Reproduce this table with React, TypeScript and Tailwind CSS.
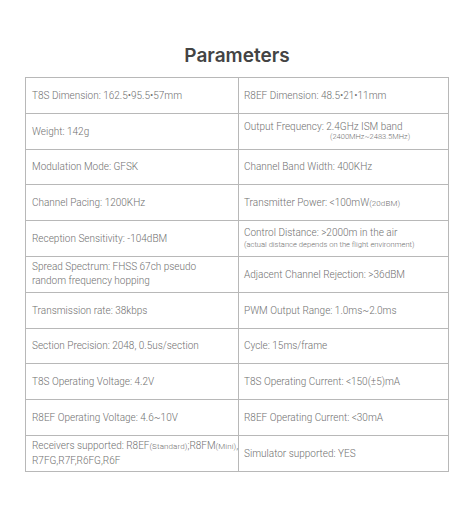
import React from "react";

type Cell = React.ReactNode;

const Small = ({ children }: { children: React.ReactNode }) => (
  <span className="text-[8px] tracking-[0.1px]">{children}</span>
);

const rows: [Cell, Cell][] = [
  ["T8S Dimension: 162.5•95.5•57mm", "R8EF Dimension: 48.5•21•11mm"],
  [
    "Weight: 142g",
    <div className="leading-[11px]">
      <div>Output Frequency: 2.4GHz ISM band</div>
      <div className="pl-[86px] text-[7.5px] leading-[10px]">(2400MHz~2483.5MHz)</div>
    </div>,
  ],
  ["Modulation Mode: GFSK", "Channel Band Width: 400KHz"],
  [
    "Channel Pacing: 1200KHz",
    <span>
      Transmitter Power: &lt;100mW<Small>(20dBM)</Small>
    </span>,
  ],
  [
    "Reception Sensitivity: -104dBM",
    <div className="leading-[12px]">
      <div>Control Distance: &gt;2000m in the air</div>
      <div className="text-[7.6px] leading-[11px] whitespace-nowrap">
        (actual distance depends on the flight environment)
      </div>
    </div>,
  ],
  [
    <div className="leading-[14px]">
      Spread Spectrum: FHSS 67ch pseudo
      <br />
      random frequency hopping
    </div>,
    "Adjacent Channel Rejection: >36dBM",
  ],
  ["Transmission rate: 38kbps", "PWM Output Range: 1.0ms~2.0ms"],
  ["Section Precision: 2048, 0.5us/section", "Cycle: 15ms/frame"],
  ["T8S Operating Voltage: 4.2V", "T8S Operating Current: <150(±5)mA"],
  ["R8EF Operating Voltage: 4.6~10V", "R8EF Operating Current: <30mA"],
  [
    <div className="leading-[14px] whitespace-nowrap">
      Receivers supported: R8EF<Small>(Standard)</Small>;R8FM<Small>(Mini)</Small>,
      <br />
      R7FG,R7F,R6FG,R6F
    </div>,
    "Simulator supported: YES",
  ],
];

export default function App() {
  return (
    <div className="w-[474px] h-[511px] bg-white font-['Roboto',sans-serif]">
      <h1 className="pt-[42px] text-center text-[19px] leading-[27px] font-semibold text-[#444] font-['Inter',sans-serif]">
        Parameters
      </h1>
      <table className="mt-[8px] ml-[25px] w-[424px] border-collapse table-fixed">
        <tbody>
          {rows.map((r, i) => (
            <tr key={i} className="h-[35.8px]">
              <td className="w-[213px] border border-[#b8b8b8] px-[6px] text-[10px] font-light text-[#707070] align-middle">
                {r[0]}
              </td>
              <td className="border border-[#b8b8b8] px-[5px] text-[10px] font-light text-[#707070] align-middle">
                {r[1]}
              </td>
            </tr>
          ))}
        </tbody>
      </table>
    </div>
  );
}
